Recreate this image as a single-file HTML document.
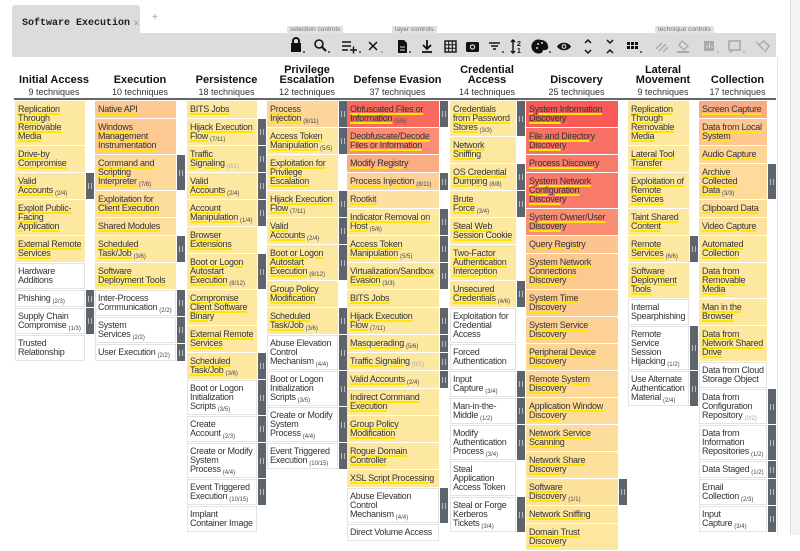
<!DOCTYPE html>
<html><head><meta charset="utf-8"><style>
*{margin:0;padding:0;box-sizing:border-box}
body{width:800px;height:535px;overflow:hidden;background:#fff;font-family:"Liberation Sans",Arial,sans-serif;position:relative;color:#222}
.tab{position:absolute;left:12px;top:5px;width:128px;height:30px;background:#dcdcdc;border-radius:3px 3px 0 0;font-family:"Liberation Mono",monospace;font-weight:bold;font-size:10px;padding:13px 0 0 10px;color:#222}
.tab span{font-weight:normal;color:#888;font-size:8px;margin-left:4px}
.plus{position:absolute;left:152px;top:12px;color:#999;font-size:10px}
.bar{position:absolute;left:12px;top:33px;width:764px;height:24px;background:#dcdcdc}
.lbl{position:absolute;top:26px;height:8px;background:#e2e2e2;color:#777;font-size:6.5px;line-height:8px;padding:0 3px}
.ic{position:absolute;top:37px}
.sb{position:absolute;left:790px;top:0;width:10px;height:535px;background:#f3f3f3;border-left:1px solid #e0e0e0}
.vl{position:absolute;left:777px;top:57px;width:1px;height:478px;background:#e6e6e6}
.hr{position:absolute;left:14px;top:98px;width:762px;height:2px;background:#666}
.h{position:absolute;top:60px;height:37px;display:flex;flex-direction:column;justify-content:flex-end;align-items:center;text-align:center}
.h b{font-size:11px;line-height:9.5px;color:#111}
.h s{text-decoration:none;font-size:9px;color:#333;margin-top:2px;line-height:10px}
.col{position:absolute;top:101px}
.c{display:flex;border-bottom:1px solid #fff;overflow:hidden}
.t{width:var(--w);padding:4px 1px 0 3px;font-size:9px;line-height:9px;color:#333;letter-spacing:-0.25px;white-space:nowrap;overflow:hidden}
.t u{text-decoration:underline;text-decoration-color:#ffe600;text-decoration-thickness:2px;text-underline-offset:1px}
.w .t{background:#fff;border:1px solid #e3e3e3;padding:3px 0 0 2px}
.w .t u{text-decoration:none}
.t em{font-style:normal;font-size:6px;color:#444;position:relative;top:2px;margin-left:2px;letter-spacing:0}
.t em.g{color:#aaa}
.c i{width:8px;margin-left:1px;flex:none}
.c b{width:8px;margin-left:1px;background:#5d646b;position:relative;flex:none}
.c b:after{content:"";position:absolute;left:2px;top:50%;margin-top:-3px;height:6px;border-left:1px solid #bbb;border-right:1px solid #bbb;width:2px}
.y .t{background:#fde8a2}
.h1{height:18px}.h2{height:27px}.h3{height:36px}.h4{height:45px}
</style></head><body>
<div class="tab">Software Execution<span>x</span></div>
<div class="plus">+</div>
<div class="bar"></div>
<div class="lbl" style="left:287px">selection controls</div>
<div class="lbl" style="left:392px">layer controls</div>
<div class="lbl" style="left:655px">technique controls</div>
<svg class="ic" style="left:286px" width="490" height="18" viewBox="0 0 490 18">
<g fill="#111" stroke="#111">
<rect x="5" y="6" width="10" height="9" stroke="none"/><path d="M7 7V4a3 3 0 0 1 6 0v3" fill="none" stroke-width="2"/><circle cx="18" cy="15" r="0.9" stroke="none"/>
<circle cx="33" cy="7" r="4" fill="none" stroke-width="1.6"/><path d="M36 10l4 4" stroke-width="2"/><circle cx="43" cy="15" r="0.9" stroke="none"/>
<path d="M56 5h9M56 9h9M56 13h6M64 13h7M67.5 9.5v7" stroke-width="1.4"/><circle cx="74" cy="15" r="0.9" stroke="none"/>
<path d="M83 5l8 8M91 5l-8 8" stroke-width="1.5"/><circle cx="96" cy="15" r="0.9" stroke="none" fill="#888"/>
<path d="M112 3h6l3 3v10h-9z" stroke="none"/><path d="M114 10h5M114 13h5" stroke="#ddd" stroke-width="1"/><circle cx="124" cy="15" r="0.9" stroke="none"/>
<path d="M141 3v8M137 8l4 4 4-4M136 15h10" stroke-width="1.8" fill="none"/>
<rect x="159" y="4" width="11" height="11" fill="none" stroke-width="1.4"/><path d="M162.7 4v11M166.3 4v11M159 7.7h11M159 11.3h11" stroke-width="1"/>
<rect x="180" y="5" width="13" height="10" rx="1.5" stroke="none"/><circle cx="186.5" cy="10" r="2.7" fill="#dcdcdc" stroke="none"/><circle cx="186.5" cy="10" r="1.5" stroke="none"/>
<path d="M203 6h11M205 9h7M207 12h3" stroke-width="1.4"/><circle cx="217" cy="15" r="0.9" stroke="none"/>
<path d="M227 3v13M225 5l2-2 2 2M225 14l2 2 2-2" stroke-width="1.4" fill="none"/><text x="231" y="9" font-size="7" font-weight="bold" stroke="none" font-family="Liberation Sans">2</text><text x="231" y="16" font-size="7" font-weight="bold" stroke="none" font-family="Liberation Sans">1</text>
<path d="M255 3a7 7 0 1 0 0 13c2 0 1-3 3-3h2a3 3 0 0 0 2-4 7 7 0 0 0-7-6z" stroke="none"/><circle cx="252" cy="7" r="1" fill="#ddd" stroke="none"/><circle cx="256" cy="6" r="1" fill="#ddd" stroke="none"/><circle cx="251" cy="11" r="1" fill="#ddd" stroke="none"/><circle cx="264" cy="15" r="0.9" stroke="none"/>
<path d="M271 9.5c3-5 11-5 14 0-3 5-11 5-14 0z" stroke="none"/><circle cx="278" cy="9.5" r="2.4" fill="#dcdcdc" stroke="none"/><circle cx="278" cy="9.5" r="1.3" stroke="none"/>
<path d="M299 6l3-3 3 3M299 13l3 3 3-3" stroke-width="1.5" fill="none"/>
<path d="M321 3l3 3 3-3M321 16l3-3 3 3" stroke-width="1.5" fill="none"/>
<rect x="341" y="5" width="3" height="3" stroke="none"/><rect x="345" y="5" width="3" height="3" stroke="none"/><rect x="349" y="5" width="3" height="3" stroke="none"/><rect x="341" y="9" width="3" height="3" stroke="none"/><rect x="345" y="9" width="3" height="3" stroke="none"/><rect x="349" y="9" width="3" height="3" stroke="none"/><circle cx="355" cy="15" r="0.9" stroke="none"/>
</g>
<g fill="#aaa" stroke="#aaa">
<path d="M370 12l6-6M373 14l7-7M377 15l5-5" stroke-width="1.4"/>
<path d="M396 4l6 5-4 4-5-5z" fill="none" stroke-width="1.4"/><path d="M391 15h12" stroke-width="2"/>
<rect x="418" y="4" width="10" height="10" stroke="none"/><path d="M421 11v-3M423.5 11v-5M426 11v-2" stroke="#ddd"/><circle cx="432" cy="15" r="0.9" stroke="none"/>
<rect x="443" y="4" width="11" height="9" fill="none" stroke-width="1.6"/><path d="M445 13l-1 3 3-3" stroke-width="1"/><circle cx="458" cy="15" r="0.9" stroke="none"/>
<path d="M470 5l8 8M472 8l6-4 5 5-4 6" stroke-width="1.4" fill="none"/>
</g></svg>
<div class="sb"></div><div class="vl"></div>

<div class="h" style="left:15px;width:78px"><b>Initial Access</b><s>9 techniques</s></div>
<div class="h" style="left:95px;width:90px"><b>Execution</b><s>10 techniques</s></div>
<div class="h" style="left:187px;width:79px"><b>Persistence</b><s>18 techniques</s></div>
<div class="h" style="left:267px;width:80px"><b>Privilege<br>Escalation</b><s>12 techniques</s></div>
<div class="h" style="left:347px;width:101px"><b>Defense Evasion</b><s>37 techniques</s></div>
<div class="h" style="left:450px;width:74px"><b>Credential<br>Access</b><s>14 techniques</s></div>
<div class="h" style="left:526px;width:101px"><b>Discovery</b><s>25 techniques</s></div>
<div class="h" style="left:628px;width:70px"><b>Lateral<br>Movement</b><s>9 techniques</s></div>
<div class="h" style="left:699px;width:77px"><b>Collection</b><s>17 techniques</s></div>
<div class="hr"></div>

<div class="col" style="left:15px;--w:70px">
<div class="c y h4"><div class="t"><u>Replication<br>Through<br>Removable<br>Media</u></div><i></i></div>
<div class="c y h2"><div class="t"><u>Drive-by<br>Compromise</u></div><i></i></div>
<div class="c y h2"><div class="t"><u>Valid<br>Accounts</u><em>(2/4)</em></div><b></b></div>
<div class="c y h3"><div class="t"><u>Exploit Public-<br>Facing<br>Application</u></div><i></i></div>
<div class="c y h2"><div class="t"><u>External Remote<br>Services</u></div><i></i></div>
<div class="c w h2"><div class="t">Hardware<br>Additions</div><i></i></div>
<div class="c w h1"><div class="t">Phishing<em>(2/3)</em></div><b></b></div>
<div class="c w h2"><div class="t">Supply Chain<br>Compromise<em>(1/3)</em></div><b></b></div>
<div class="c w h2"><div class="t">Trusted<br>Relationship</div><i></i></div>
</div>

<div class="col" style="left:95px;--w:81px">
<div class="c h1"><div class="t" style="background:#fdc891"><u>Native API</u></div><i></i></div>
<div class="c h3"><div class="t" style="background:#fdc891"><u>Windows<br>Management<br>Instrumentation</u></div><i></i></div>
<div class="c h3"><div class="t" style="background:#fdd89b"><u>Command and<br>Scripting<br>Interpreter</u><em>(7/8)</em></div><b></b></div>
<div class="c h2"><div class="t" style="background:#fddd9c"><u>Exploitation for<br>Client Execution</u></div><i></i></div>
<div class="c h1"><div class="t" style="background:#fde0a0"><u>Shared Modules</u></div><i></i></div>
<div class="c y h2"><div class="t"><u>Scheduled<br>Task/Job</u><em>(3/6)</em></div><b></b></div>
<div class="c y h2"><div class="t"><u>Software<br>Deployment Tools</u></div><i></i></div>
<div class="c w h2"><div class="t">Inter-Process<br>Communication<em>(2/2)</em></div><b></b></div>
<div class="c w h2"><div class="t">System<br>Services<em>(2/2)</em></div><b></b></div>
<div class="c w h1"><div class="t">User Execution<em>(2/2)</em></div><b></b></div>
</div>

<div class="col" style="left:187px;--w:70px">
<div class="c y h1"><div class="t"><u>BITS Jobs</u></div><i></i></div>
<div class="c y h2"><div class="t"><u>Hijack Execution<br>Flow</u><em>(7/11)</em></div><b></b></div>
<div class="c y h2"><div class="t"><u>Traffic<br>Signaling</u><em class="g">(0/1)</em></div><b></b></div>
<div class="c y h2"><div class="t"><u>Valid<br>Accounts</u><em>(2/4)</em></div><b></b></div>
<div class="c y h2"><div class="t"><u>Account<br>Manipulation</u><em>(1/4)</em></div><b></b></div>
<div class="c y h2"><div class="t"><u>Browser<br>Extensions</u></div><i></i></div>
<div class="c y h3"><div class="t"><u>Boot or Logon<br>Autostart<br>Execution</u><em>(8/12)</em></div><b></b></div>
<div class="c y h3"><div class="t"><u>Compromise<br>Client Software<br>Binary</u></div><i></i></div>
<div class="c y h2"><div class="t"><u>External Remote<br>Services</u></div><i></i></div>
<div class="c y h2"><div class="t"><u>Scheduled<br>Task/Job</u><em>(3/6)</em></div><b></b></div>
<div class="c w h3"><div class="t">Boot or Logon<br>Initialization<br>Scripts<em>(3/5)</em></div><b></b></div>
<div class="c w h2"><div class="t">Create<br>Account<em>(2/3)</em></div><b></b></div>
<div class="c w h3"><div class="t">Create or Modify<br>System<br>Process<em>(4/4)</em></div><b></b></div>
<div class="c w h2"><div class="t">Event Triggered<br>Execution<em>(10/15)</em></div><b></b></div>
<div class="c w h2"><div class="t">Implant<br>Container Image</div><i></i></div>
</div>

<div class="col" style="left:267px;--w:71px">
<div class="c h2"><div class="t" style="background:#fdd49a"><u>Process<br>Injection</u><em>(8/11)</em></div><b></b></div>
<div class="c y h2"><div class="t"><u>Access Token<br>Manipulation</u><em>(5/5)</em></div><b></b></div>
<div class="c y h3"><div class="t"><u>Exploitation for<br>Privilege<br>Escalation</u></div><i></i></div>
<div class="c y h2"><div class="t"><u>Hijack Execution<br>Flow</u><em>(7/11)</em></div><b></b></div>
<div class="c y h2"><div class="t"><u>Valid<br>Accounts</u><em>(2/4)</em></div><b></b></div>
<div class="c y h3"><div class="t"><u>Boot or Logon<br>Autostart<br>Execution</u><em>(8/12)</em></div><b></b></div>
<div class="c y h2"><div class="t"><u>Group Policy<br>Modification</u></div><i></i></div>
<div class="c y h2"><div class="t"><u>Scheduled<br>Task/Job</u><em>(3/6)</em></div><b></b></div>
<div class="c w h3"><div class="t">Abuse Elevation<br>Control<br>Mechanism<em>(4/4)</em></div><b></b></div>
<div class="c w h3"><div class="t">Boot or Logon<br>Initialization<br>Scripts<em>(3/5)</em></div><b></b></div>
<div class="c w h3"><div class="t">Create or Modify<br>System<br>Process<em>(4/4)</em></div><b></b></div>
<div class="c w h2"><div class="t">Event Triggered<br>Execution<em>(10/15)</em></div><b></b></div>
</div>

<div class="col" style="left:347px;--w:92px">
<div class="c h2"><div class="t" style="background:#f86a5e"><u>Obfuscated Files or<br>Information</u><em>(5/5)</em></div><b></b></div>
<div class="c h2"><div class="t" style="background:#fa8d75"><u>Deobfuscate/Decode<br>Files or Information</u></div><i></i></div>
<div class="c h1"><div class="t" style="background:#fbac80"><u>Modify Registry</u></div><i></i></div>
<div class="c h1"><div class="t" style="background:#fdd198"><u>Process Injection</u><em>(8/11)</em></div><b></b></div>
<div class="c h1"><div class="t" style="background:#fde09f"><u>Rootkit</u></div><i></i></div>
<div class="c y h2"><div class="t"><u>Indicator Removal on<br>Host</u><em>(5/6)</em></div><b></b></div>
<div class="c y h2"><div class="t"><u>Access Token<br>Manipulation</u><em>(5/5)</em></div><b></b></div>
<div class="c y h2"><div class="t"><u>Virtualization/Sandbox<br>Evasion</u><em>(3/3)</em></div><b></b></div>
<div class="c y h1"><div class="t"><u>BITS Jobs</u></div><i></i></div>
<div class="c y h2"><div class="t"><u>Hijack Execution<br>Flow</u><em>(7/11)</em></div><b></b></div>
<div class="c y h1"><div class="t"><u>Masquerading</u><em>(5/6)</em></div><b></b></div>
<div class="c y h1"><div class="t"><u>Traffic Signaling</u><em class="g">(0/1)</em></div><b></b></div>
<div class="c y h1"><div class="t"><u>Valid Accounts</u><em>(2/4)</em></div><b></b></div>
<div class="c y h2"><div class="t"><u>Indirect Command<br>Execution</u></div><i></i></div>
<div class="c y h2"><div class="t"><u>Group Policy<br>Modification</u></div><i></i></div>
<div class="c y h2"><div class="t"><u>Rogue Domain<br>Controller</u></div><i></i></div>
<div class="c y h1"><div class="t"><u>XSL Script Processing</u></div><i></i></div>
<div class="c w h3"><div class="t">Abuse Elevation<br>Control<br>Mechanism<em>(4/4)</em></div><b></b></div>
<div class="c w h1"><div class="t">Direct Volume Access</div><i></i></div>
</div>

<div class="col" style="left:450px;--w:66px">
<div class="c y h3"><div class="t"><u>Credentials<br>from Password<br>Stores</u><em>(3/3)</em></div><b></b></div>
<div class="c y h2"><div class="t"><u>Network<br>Sniffing</u></div><i></i></div>
<div class="c y h2"><div class="t"><u>OS Credential<br>Dumping</u><em>(8/8)</em></div><b></b></div>
<div class="c y h2"><div class="t"><u>Brute<br>Force</u><em>(3/4)</em></div><b></b></div>
<div class="c y h2"><div class="t"><u>Steal Web<br>Session Cookie</u></div><i></i></div>
<div class="c y h3"><div class="t"><u>Two-Factor<br>Authentication<br>Interception</u></div><i></i></div>
<div class="c y h2"><div class="t"><u>Unsecured<br>Credentials</u><em>(4/6)</em></div><b></b></div>
<div class="c w h3"><div class="t">Exploitation for<br>Credential<br>Access</div><i></i></div>
<div class="c w h2"><div class="t">Forced<br>Authentication</div><i></i></div>
<div class="c w h2"><div class="t">Input<br>Capture<em>(3/4)</em></div><b></b></div>
<div class="c w h2"><div class="t">Man-in-the-<br>Middle<em>(1/2)</em></div><b></b></div>
<div class="c w h3"><div class="t">Modify<br>Authentication<br>Process<em>(3/4)</em></div><b></b></div>
<div class="c w h3"><div class="t">Steal<br>Application<br>Access Token</div><i></i></div>
<div class="c w h3"><div class="t">Steal or Forge<br>Kerberos<br>Tickets<em>(3/4)</em></div><b></b></div>
</div>

<div class="col" style="left:526px;--w:92px">
<div class="c h2"><div class="t" style="background:#f85a58"><u>System Information<br>Discovery</u></div><i></i></div>
<div class="c h2"><div class="t" style="background:#f97165"><u>File and Directory<br>Discovery</u></div><i></i></div>
<div class="c h1"><div class="t" style="background:#f97b69"><u>Process Discovery</u></div><i></i></div>
<div class="c h3"><div class="t" style="background:#f9796a"><u>System Network<br>Configuration<br>Discovery</u></div><i></i></div>
<div class="c h2"><div class="t" style="background:#fa8e74"><u>System Owner/User<br>Discovery</u></div><i></i></div>
<div class="c h1"><div class="t" style="background:#fcc48f"><u>Query Registry</u></div><i></i></div>
<div class="c h3"><div class="t" style="background:#fcca91"><u>System Network<br>Connections<br>Discovery</u></div><i></i></div>
<div class="c h2"><div class="t" style="background:#fccb92"><u>System Time<br>Discovery</u></div><i></i></div>
<div class="c h2"><div class="t" style="background:#fdd095"><u>System Service<br>Discovery</u></div><i></i></div>
<div class="c h2"><div class="t" style="background:#fdd597"><u>Peripheral Device<br>Discovery</u></div><i></i></div>
<div class="c h2"><div class="t" style="background:#fdd899"><u>Remote System<br>Discovery</u></div><i></i></div>
<div class="c h2"><div class="t" style="background:#fddb9a"><u>Application Window<br>Discovery</u></div><i></i></div>
<div class="c h2"><div class="t" style="background:#fddd9b"><u>Network Service<br>Scanning</u></div><i></i></div>
<div class="c h2"><div class="t" style="background:#fde09c"><u>Network Share<br>Discovery</u></div><i></i></div>
<div class="c h2"><div class="t" style="background:#fde29e"><u>Software<br>Discovery</u><em>(1/1)</em></div><b></b></div>
<div class="c h1"><div class="t" style="background:#fde49f"><u>Network Sniffing</u></div><i></i></div>
<div class="c h2"><div class="t" style="background:#fde6a0"><u>Domain Trust<br>Discovery</u></div><i></i></div>
</div>

<div class="col" style="left:628px;--w:61px">
<div class="c y h4"><div class="t"><u>Replication<br>Through<br>Removable<br>Media</u></div><i></i></div>
<div class="c y h2"><div class="t"><u>Lateral Tool<br>Transfer</u></div><i></i></div>
<div class="c y h3"><div class="t"><u>Exploitation of<br>Remote<br>Services</u></div><i></i></div>
<div class="c y h2"><div class="t"><u>Taint Shared<br>Content</u></div><i></i></div>
<div class="c y h2"><div class="t"><u>Remote<br>Services</u><em>(6/6)</em></div><b></b></div>
<div class="c y h3"><div class="t"><u>Software<br>Deployment<br>Tools</u></div><i></i></div>
<div class="c w h2"><div class="t">Internal<br>Spearphishing</div><i></i></div>
<div class="c w h4"><div class="t">Remote<br>Service<br>Session<br>Hijacking<em>(1/2)</em></div><b></b></div>
<div class="c w h3"><div class="t">Use Alternate<br>Authentication<br>Material<em>(2/4)</em></div><b></b></div>
</div>

<div class="col" style="left:699px;--w:68px">
<div class="c h1"><div class="t" style="background:#fbab81"><u>Screen Capture</u></div><i></i></div>
<div class="c h2"><div class="t" style="background:#fdc793"><u>Data from Local<br>System</u></div><i></i></div>
<div class="c h1"><div class="t" style="background:#fdd597"><u>Audio Capture</u></div><i></i></div>
<div class="c h3"><div class="t" style="background:#fddb9b"><u>Archive<br>Collected<br>Data</u><em>(3/3)</em></div><b></b></div>
<div class="c h1"><div class="t" style="background:#fddf9d"><u>Clipboard Data</u></div><i></i></div>
<div class="c h1"><div class="t" style="background:#fde19e"><u>Video Capture</u></div><i></i></div>
<div class="c y h2"><div class="t"><u>Automated<br>Collection</u></div><i></i></div>
<div class="c y h3"><div class="t"><u>Data from<br>Removable<br>Media</u></div><i></i></div>
<div class="c y h2"><div class="t"><u>Man in the<br>Browser</u></div><i></i></div>
<div class="c y h3"><div class="t"><u>Data from<br>Network Shared<br>Drive</u></div><i></i></div>
<div class="c w h2"><div class="t">Data from Cloud<br>Storage Object</div><i></i></div>
<div class="c w h3"><div class="t">Data from<br>Configuration<br>Repository<em class="g">(0/2)</em></div><b></b></div>
<div class="c w h3"><div class="t">Data from<br>Information<br>Repositories<em>(1/2)</em></div><b></b></div>
<div class="c w h1"><div class="t">Data Staged<em>(1/2)</em></div><b></b></div>
<div class="c w h2"><div class="t">Email<br>Collection<em>(2/3)</em></div><b></b></div>
<div class="c w h2"><div class="t">Input<br>Capture<em>(3/4)</em></div><b></b></div>
</div>
</body></html>
